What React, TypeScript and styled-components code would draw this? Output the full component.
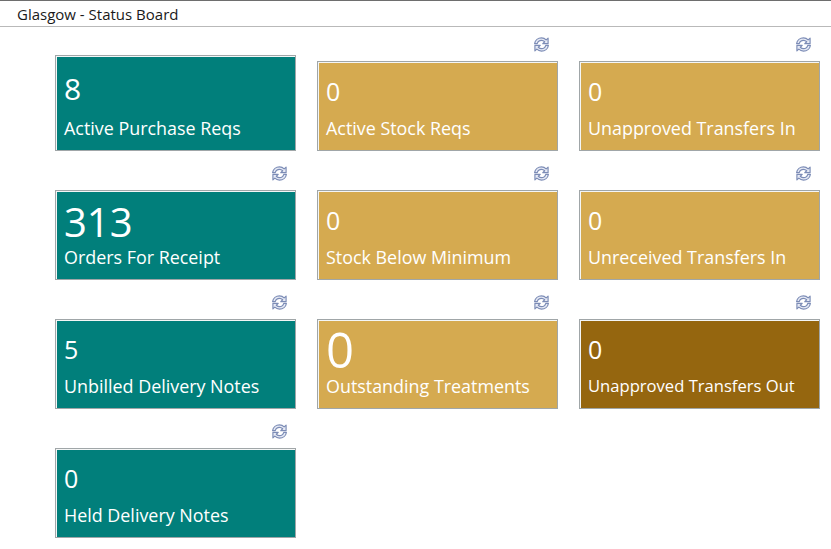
import React from "react";
import styled, { createGlobalStyle } from "styled-components";

type Tone = "teal" | "gold" | "brown";
type ValueSize = "normal" | "medium" | "large" | "huge";

interface TileData {
  value: string;
  label: string;
  tone: Tone;
  size?: ValueSize;
  noRefresh?: boolean;
  smallLabel?: boolean;
}

const tiles: TileData[] = [
  { value: "8", label: "Active Purchase Reqs", tone: "teal", size: "medium", noRefresh: true },
  { value: "0", label: "Active Stock Reqs", tone: "gold" },
  { value: "0", label: "Unapproved Transfers In", tone: "gold" },
  { value: "313", label: "Orders For Receipt", tone: "teal", size: "large" },
  { value: "0", label: "Stock Below Minimum", tone: "gold" },
  { value: "0", label: "Unreceived Transfers In", tone: "gold" },
  { value: "5", label: "Unbilled Delivery Notes", tone: "teal" },
  { value: "0", label: "Outstanding Treatments", tone: "gold", size: "huge" },
  { value: "0", label: "Unapproved Transfers Out", tone: "brown", smallLabel: true },
  { value: "0", label: "Held Delivery Notes", tone: "teal" },
];

const toneColors: Record<Tone, string> = {
  teal: "#017f7b",
  gold: "#d5aa50",
  brown: "#95660f",
};

const valueStyles: Record<ValueSize, { font: string; gap: string }> = {
  normal: { font: "25px", gap: "14px" },
  medium: { font: "30px", gap: "14px" },
  large: { font: "40px", gap: "5px" },
  huge: { font: "49px", gap: "2px" },
};

const GlobalStyle = createGlobalStyle`
  html, body {
    margin: 0;
    padding: 0;
    background: #fff;
  }
  body {
    font-family: "Open Sans", "Noto Sans", "Liberation Sans", sans-serif;
  }
`;

const Page = styled.div`
  width: 831px;
  height: 549px;
  overflow: hidden;
  box-sizing: border-box;
  border-top: 1px solid #6e6e6e;
`;

const TitleBar = styled.div`
  height: 26px;
  box-sizing: border-box;
  padding: 3px 0 0 17px;
  border-bottom: 1px solid #b9b9b9;
  font-size: 15px;
  line-height: 20px;
  color: #1a1a1a;
`;

const Board = styled.div`
  display: grid;
  grid-template-columns: repeat(3, 241px);
  column-gap: 21px;
  row-gap: 14px;
  padding: 9px 0 0 55px;
  align-items: end;
`;

const Tile = styled.div<{ $short?: boolean }>`
  display: flex;
  flex-direction: column;
  height: ${(p) => (p.$short ? "96px" : "115px")};
`;

const RefreshRow = styled.div`
  flex: none;
  height: 25px;
  display: flex;
  justify-content: flex-end;
  padding-right: 8px;
`;

const Card = styled.div<{ $tone: Tone }>`
  flex: 1;
  min-height: 0;
  box-sizing: border-box;
  display: flex;
  flex-direction: column;
  justify-content: flex-end;
  background: ${(p) => toneColors[p.$tone]};
  border: 1px solid #a0a6a8;
  box-shadow: inset 1px 1px 0 #f4f6f6;
  color: #fff;
  padding: 0 0 12px 8px;
`;

const Value = styled.div<{ $size: ValueSize }>`
  font-size: ${(p) => valueStyles[p.$size].font};
  margin-bottom: ${(p) => valueStyles[p.$size].gap};
  line-height: 1;
`;

const Label = styled.div<{ $small?: boolean }>`
  font-size: ${(p) => (p.$small ? "16.6px" : "17.9px")};
  line-height: 20px;
  white-space: nowrap;
`;

const RefreshIcon = () => (
  <svg width="17" height="17" viewBox="0 0 16 16" fill="none">
    <path
      d="M1.5 7.2C2 4 4.8 1.8 8 1.8c1.8 0 3.3.7 4.4 1.8L14.2 2v5.2H9.2l1.8-1.8C10.2 4.6 9.2 4.1 8 4.1c-1.9 0-3.5 1.3-4 3.1H1.5Z"
      fill="#e6eaf5"
      stroke="#7c8cb6"
      strokeWidth="1.1"
      strokeLinejoin="round"
    />
    <path
      d="M14.5 8.8c-.5 3.2-3.3 5.4-6.5 5.4-1.8 0-3.3-.7-4.4-1.8L1.8 14V8.8h5L5 10.6c.8.8 1.8 1.3 3 1.3 1.9 0 3.5-1.3 4-3.1h2.5Z"
      fill="#e6eaf5"
      stroke="#7c8cb6"
      strokeWidth="1.1"
      strokeLinejoin="round"
    />
  </svg>
);

export default function App() {
  return (
    <Page>
      <GlobalStyle />
      <TitleBar>Glasgow - Status Board</TitleBar>
      <Board>
        {tiles.map((t) => (
          <Tile key={t.label} $short={t.noRefresh}>
            {t.noRefresh ? null : (
              <RefreshRow>
                <RefreshIcon />
              </RefreshRow>
            )}
            <Card $tone={t.tone}>
              <Value $size={t.size ?? "normal"}>{t.value}</Value>
              <Label $small={t.smallLabel}>{t.label}</Label>
            </Card>
          </Tile>
        ))}
      </Board>
    </Page>
  );
}
